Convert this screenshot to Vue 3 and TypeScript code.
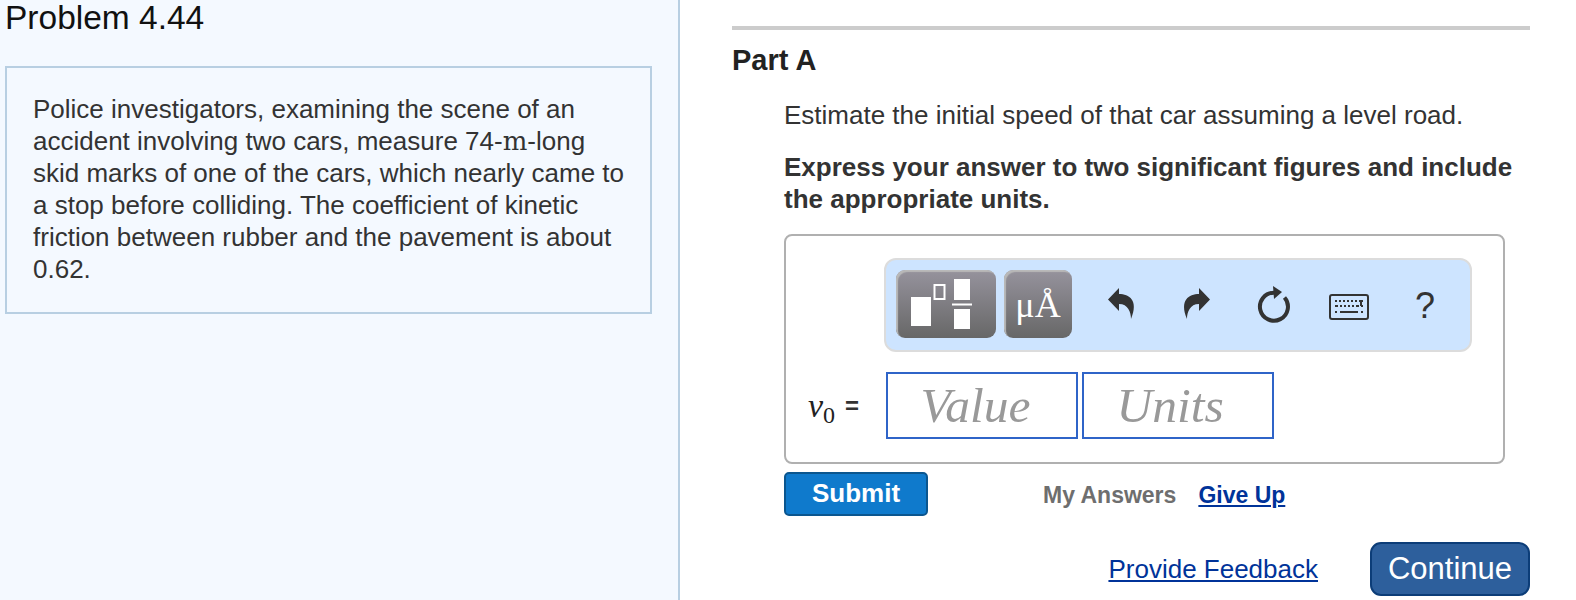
<template>
  <div class="page">
    <!-- 左侧题目 -->
    <aside class="left">
      <h1 class="problem-title">Problem 4.44</h1>
      <div class="problem-box">
        <p>
          Police investigators, examining the scene of an<br />
          accident involving two cars, measure 74-<span class="unit">m</span>-long<br />
          skid marks of one of the cars, which nearly came to<br />
          a stop before colliding. The coefficient of kinetic<br />
          friction between rubber and the pavement is about<br />
          0.62.
        </p>
      </div>
    </aside>

    <!-- 右侧作答 -->
    <main class="right">
      <div class="rule"></div>
      <h2 class="part-title">Part A</h2>
      <div class="part-body">
        <p class="question">Estimate the initial speed of that car assuming a level road.</p>
        <p class="instruction">Express your answer to two significant figures and include<br />the appropriate units.</p>

        <div class="answer-box">
          <div class="toolbar">
            <button class="tool-btn templates" aria-label="Templates">
              <svg width="70" height="50" viewBox="0 0 70 50">
                <rect x="0" y="18" width="20" height="29" fill="#fff" />
                <rect x="23.500" y="6" width="10" height="14" fill="none" stroke="#fff" stroke-width="2" />
                <rect x="43" y="0" width="16" height="21" fill="#fff" />
                <rect x="41" y="24.500" width="20" height="2" fill="#fff" />
                <rect x="43" y="30" width="16" height="20" fill="#fff" />
              </svg>
            </button>
            <button class="tool-btn units-btn" aria-label="Units">μÅ</button>
            <div class="icons">
              <svg class="icon" width="32" height="36" viewBox="0 0 32 36">
                <path d="M3 13.500 L14 2 L14 8 C24 8 34 14 26 33 C26 26 23 18 14 18 L14 25 Z" fill="#333" />
              </svg>
              <svg class="icon" width="32" height="36" viewBox="0 0 32 36">
                <path d="M29 13.500 L18 2 L18 8 C8 8 -2 14 6 33 C6 26 9 18 18 18 L18 25 Z" fill="#333" />
              </svg>
              <svg class="icon reset" width="36" height="42" viewBox="0 0 36 42">
                <path d="M20 9.700 A14 14 0 1 0 30.500 14.500" fill="none" stroke="#333" stroke-width="4" />
                <path d="M19 3 L28 9 L20 16 Z" fill="#333" />
              </svg>
              <svg class="icon keyboard" width="40" height="26" viewBox="0 0 40 26">
                <rect x="1" y="1" width="38" height="24" rx="2" fill="none" stroke="#333" stroke-width="2" />
                <path d="M6 7h2M10 7h2M14 7h2M18 7h2M22 7h2M26 7h2M30 7h4M6 12h3M11 12h2M15 12h2M19 12h2M23 12h2M27 12h3M32 12h2M32 7v5M6 18h2M11 18h18M32 18h2" stroke="#333" stroke-width="2" fill="none" />
              </svg>
              <span class="help">?</span>
            </div>
          </div>
          <div class="answer-row">
            <span class="var"><i>v</i><sub>0</sub></span>
            <span class="equals">=</span>
            <div class="field">Value</div>
            <div class="field">Units</div>
          </div>
        </div>

        <div class="actions">
          <button class="submit">Submit</button>
          <div class="links">
            <span class="my-answers">My Answers</span>
            <a class="give-up" href="#">Give Up</a>
          </div>
        </div>
      </div>

      <div class="footer">
        <a class="feedback" href="#">Provide Feedback</a>
        <button class="continue">Continue</button>
      </div>
    </main>
  </div>
</template>

<script setup lang="ts">
</script>

<style>
html,
body {
  margin: 0;
  background: #fff;
  overflow: hidden;
}
</style>

<style scoped>
.page {
  display: flex;
  width: 1576px;
  height: 600px;
  font-family: "Liberation Sans", Arial, sans-serif;
  color: #333;
  overflow: hidden;
}

.left {
  width: 680px;
  height: 600px;
  flex: none;
  box-sizing: border-box;
  background: #f4f9ff;
  border-right: 2px solid #b8cfe2;
  padding: 0 26px 0 5px;
}

.problem-title {
  margin: 0;
  height: 66px;
  font-size: 33.500px;
  line-height: 36px;
  font-weight: 400;
  color: #111;
}

.problem-box {
  height: 248px;
  box-sizing: border-box;
  border: 2px solid #b8cfe2;
  padding: 25px 26px 0;
}

.problem-box p {
  margin: 0;
  font-size: 26px;
  line-height: 32px;
  white-space: nowrap;
}

.unit {
  font-family: "DejaVu Serif", serif;
  font-size: 26px;
  line-height: 0;
}

.right {
  flex: 1;
  padding: 26px 46px 0 52px;
}

.rule {
  height: 4px;
  background: #ccc;
}

.part-title {
  margin: 0;
  padding-top: 14px;
  font-size: 29px;
  line-height: 32px;
  font-weight: 700;
  color: #222;
}

.part-body {
  padding-left: 52px;
}

.question {
  margin: 23px 0 0;
  font-size: 26px;
  line-height: 32px;
}

.instruction {
  margin: 20px 0 0;
  font-size: 26px;
  line-height: 32px;
  font-weight: 700;
  white-space: nowrap;
}

.answer-box {
  margin-top: 19px;
  width: 721px;
  height: 230px;
  box-sizing: border-box;
  border: 2px solid #b0b0b0;
  border-radius: 8px;
  padding: 22px 0 0 98px;
}

.toolbar {
  display: flex;
  align-items: center;
  width: 588px;
  height: 94px;
  box-sizing: border-box;
  padding: 0 0 2px 10px;
  background: #cde4ff;
  border: 2px solid #dcdcdc;
  border-radius: 12px;
}

.tool-btn {
  height: 68px;
  padding: 0;
  display: flex;
  align-items: center;
  justify-content: center;
  border: none;
  border-radius: 9px;
  background: linear-gradient(#96939d, #676767);
  box-shadow: inset 2px 2px 1px #b9b9b9;
  color: #fff;
}

.templates {
  width: 100px;
}

.units-btn {
  width: 68px;
  margin-left: 8px;
  font-family: "Liberation Serif", serif;
  font-size: 36px;
  padding-top: 2px;
}

.icons {
  display: flex;
  align-items: center;
  margin-left: 26px;
}

.icon {
  width: 46px;
  margin-right: 30px;
}

.reset {
  margin-left: -1px;
  margin-right: 31px;
}

.keyboard {
  margin-top: 6px;
}

.help {
  width: 46px;
  margin-top: 3px;
  text-align: center;
  font-size: 36px;
  line-height: 36px;
}

.answer-row {
  display: flex;
  align-items: center;
  margin-top: 20px;
  margin-left: -76px;
}

.var {
  font-family: "Liberation Serif", serif;
  font-size: 34px;
  color: #222;
}

.var sub {
  font-size: 24px;
  line-height: 0;
  vertical-align: -0.25em;
}

.equals {
  margin-left: 10px;
  width: 40.500px;
  font-size: 24px;
  font-weight: 700;
}

.field {
  width: 192px;
  height: 67px;
  box-sizing: border-box;
  margin-right: 4px;
  border: 2px solid #2f64c8;
  padding-left: 33px;
  font-family: "Liberation Serif", serif;
  font-style: italic;
  font-size: 49.500px;
  line-height: 63px;
  color: #999;
}

.actions {
  display: flex;
  align-items: center;
  margin-top: 8px;
}

.submit {
  width: 144px;
  height: 44px;
  padding: 0 0 2px;
  border: 2px solid #0b568f;
  border-radius: 5px;
  background: #0f7acc;
  color: #fff;
  font-family: inherit;
  font-size: 26px;
  font-weight: 700;
}

.links {
  display: flex;
  align-items: baseline;
  margin-left: 115px;
  padding-top: 2px;
  font-size: 23px;
  font-weight: 700;
}

.my-answers {
  color: #6e6e6e;
}

.give-up {
  margin-left: 22px;
  color: #003399;
}

.footer {
  display: flex;
  align-items: center;
  justify-content: flex-end;
  margin-top: 26px;
}

.feedback {
  margin-right: 52px;
  color: #003399;
  font-size: 26px;
}

.continue {
  width: 160px;
  height: 54px;
  padding: 0;
  border: 2px solid #0c3d78;
  border-radius: 11px;
  background: #2d5f9c;
  color: #fff;
  font-family: inherit;
  font-size: 31px;
}
</style>
